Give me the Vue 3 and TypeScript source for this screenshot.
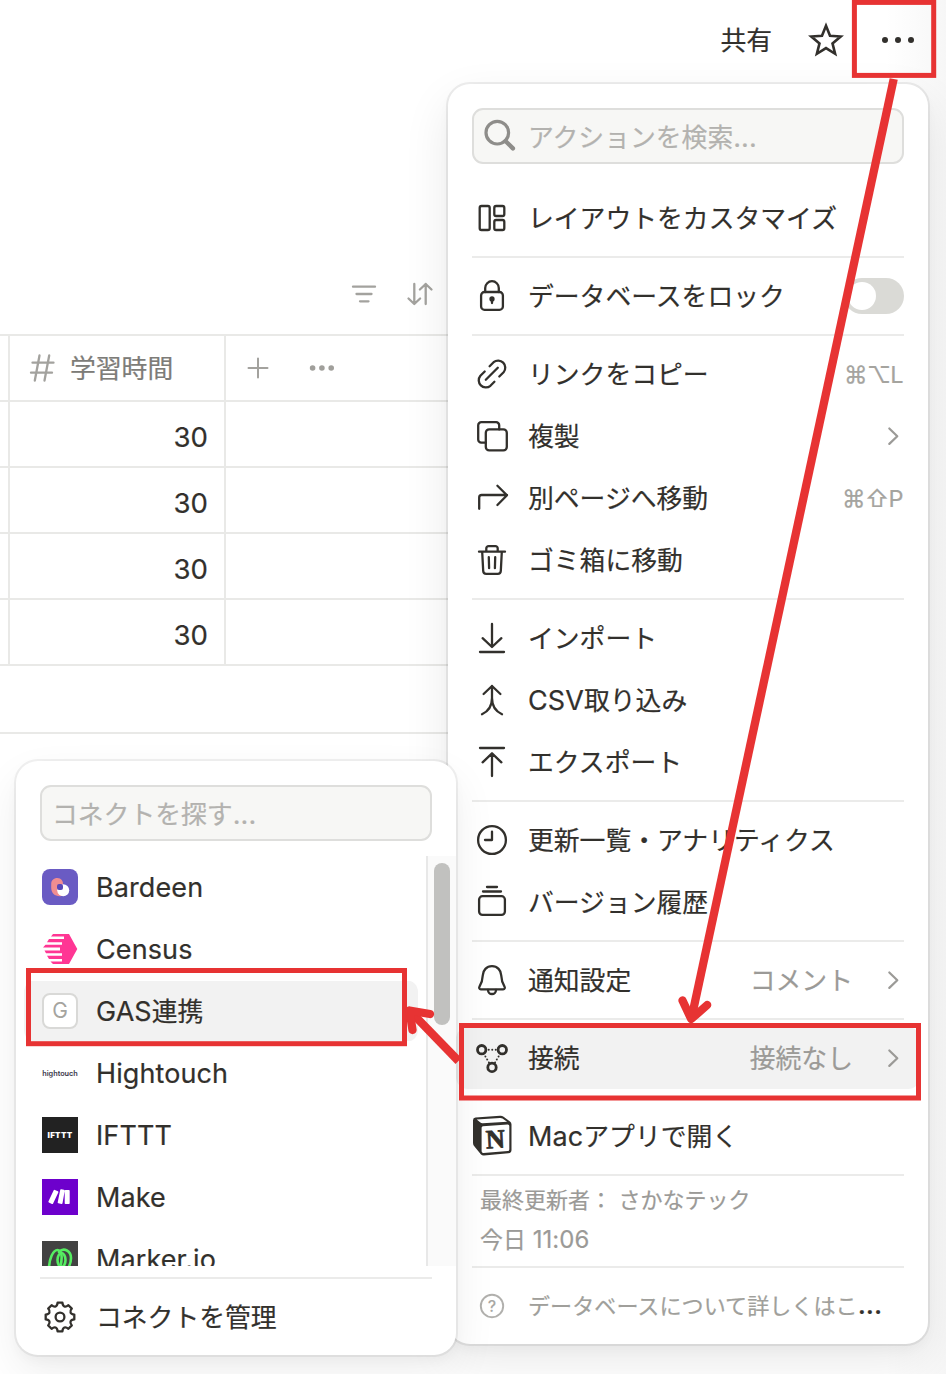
<script setup lang="ts">
import { defineComponent, h } from 'vue'

interface MenuItem {
  label: string
  icon: string
  value?: string
  keys?: string
  chevron?: boolean
  toggle?: boolean
  active?: boolean
}

/* Splits mixed text so that Latin runs get their own face and size. */
const Mixed = defineComponent({
  props: { text: { type: String, required: true } },
  setup(props) {
    return () =>
      h(
        'span',
        { class: 'mixed' },
        (props.text.match(/[\x20-\x7e]+|[^\x20-\x7e]+/g) ?? []).map((run) =>
          h('span', { class: /^[\x20-\x7e]/.test(run) ? 'latin' : 'cjk' }, run),
        ),
      )
  },
})

function gearPath(): string {
  const teeth = 8
  const at = (deg: number, r: number): string => {
    const a = (deg * Math.PI) / 180
    return `${(18 + r * Math.cos(a)).toFixed(2)} ${(18 + r * Math.sin(a)).toFixed(2)}`
  }
  let d = ''
  for (let i = 0; i < teeth; i++) {
    const base = (i * 360) / teeth - 90
    d += `${i ? 'L' : 'M'}${at(base - 9.5, 14.5)}L${at(base + 9.5, 14.5)}`
    d += `C${at(base + 15, 10.6)} ${at(base + 30, 10.6)} ${at(base + 35.5, 14.5)}`
  }
  return `${d}Z`
}

const icons: Record<string, string> = {
  layout:
    '<rect x="5.7" y="6" width="10" height="24" rx="1.8"/><rect x="20.3" y="6" width="10" height="10" rx="1.8"/><rect x="20.3" y="20" width="10" height="10" rx="1.8"/>',
  lock:
    '<rect x="7.1" y="14" width="21.8" height="17.8" rx="3.4"/><path d="M11.2 14v-4a6.8 6.8 0 0 1 13.6 0v4"/><circle cx="18" cy="21" r="1.5" fill="currentColor"/><path d="M18 21v4"/>',
  link:
    '<path d="M15.6 10.2l4-4a7.1 7.1 0 0 1 10 10l-4.3 4.3M20.4 25.8l-4 4a7.1 7.1 0 0 1-10-10l4.3-4.3M11.8 23.8l12-12"/>',
  copy:
    '<rect x="11.8" y="11.4" width="21" height="21" rx="3.4"/><path d="M11.8 24.6H7.3a3.1 3.1 0 0 1-3.1-3.1V7.3a3.1 3.1 0 0 1 3.1-3.1h14.8a3.1 3.1 0 0 1 3.1 3.1v4.1"/>',
  move: '<path d="M5.2 28.8V17.5a2.5 2.5 0 0 1 2.5-2.5H33M23.4 5.8 33 15.2 23.4 25"/>',
  trash:
    '<path d="M5 9.7h26M12.3 9.7V6.4a2.3 2.3 0 0 1 2.3-2.3h6.8a2.3 2.3 0 0 1 2.3 2.3v3.3M8.2 10l1 19a3 3 0 0 0 3 2.8h11.6a3 3 0 0 0 3-2.8l1-19M14.8 15.2l.3 11M21.2 15.2l-.3 11"/>',
  import: '<path d="M18 4v23M8.6 18.2 18 27l9.4-8.8M6 32h24"/>',
  merge: '<path d="M18 4v14.500M9.600 12 18 4l8.400 8M18 16c0 8-4 13.500-10 16.200M18 16c0 8 4 13.500 10 16.200"/>',
  export: '<path d="M18 32V9.500M8.600 18.300 18 9.300l9.400 9M6 4h24"/>',
  clock: '<circle cx="18" cy="18" r="13.900"/><path d="M18 9.600V18h-7"/>',
  history:
    '<rect x="5.100" y="12.200" width="25.800" height="18.700" rx="3.400"/><path d="M9 7.500h18M13 3h10"/>',
  bell:
    '<path d="M18 4.200c-5.500 0-9 4.100-9.200 9.100-.3 5.700-1.100 7.700-3.200 11-.9 1.600-.3 3 1.300 3h22.200c1.600 0 2.200-1.400 1.300-3-2.100-3.300-2.900-5.300-3.200-11-.2-5-3.700-9.100-9.200-9.100z"/><path d="M14 28a4 4 0 0 0 8 0"/>',
  connect:
    '<g stroke-width="2.800"><circle cx="7.700" cy="9.700" r="4.200"/><circle cx="28.300" cy="9.700" r="4.200"/><circle cx="18" cy="27.400" r="4.200"/></g><path stroke-width="1.900" stroke-dasharray=".1 3.400" d="M14.700 9.700h8M11.400 16.400l3.700 6.300M24.600 16.400l-3.700 6.300"/>',
  notion:
    '<path fill="currentColor" stroke="none" d="M1.500-.4 26-2.200q2-.2 3.600 1L36 3.400q1.500 1 1.500 3V32q0 3-3 3.200L10 37.600q-2 .1-3.200-1.300L.500 28.600Q-1 27-1 25V2.300Q-1-.1 1.500-.4z"/><path fill="#fff" stroke="none" d="M2.700 1.600 26-.1q1.400-.1 2.500.7l4.600 3.100-24.400 1.600q-1.300.1-2.300-.8zM9 8.200l24.600-1.700q1.700-.1 1.700 1.500v23.500q0 1.500-1.500 1.600L9.500 35q-1.900.1-1.900-1.700V9.800Q7.600 8.300 9 8.200z"/><text x="21.300" y="30" text-anchor="middle" font-family="Liberation Serif, serif" font-weight="700" font-size="26.500" fill="currentColor" stroke="currentColor" stroke-width=".8" transform="rotate(-3 21 21)">N</text>',
  gear: `<path d="${gearPath()}"/><circle cx="18" cy="18" r="4.400"/>`,
  bardeen:
    '<g stroke="none"><rect width="36" height="36" rx="8" fill="#6a5bc3"/><path fill="#f18d91" d="M15.300 9c4 0 6 3 5.700 6.500l-4 2.500c-.5 4 1.500 6.500 5 8.600-7 2-12.800-.6-12.800-8V15c0-3.500 2.500-6 6.100-6z"/><circle cx="21.200" cy="21.300" r="6" fill="#fff"/><rect x="15" y="15" width="6" height="6" rx="2" fill="#5a48b8"/></g>',
  census:
    '<path stroke="none" fill="#ff3694" d="M11 3h16l8.300 15L27 33H11L8.500 30.500H20V28H7L5 24.700h15v-2.500H4L2.500 19.500H18v-3H1L3.500 13.800H20v-2.500H5L7 8h15V5.500H9z"/>',
  make:
    '<g stroke="none"><path fill="#6d00cc" d="M0 0h36v36H0z"/><path fill="#fff" d="M11.700 11.300q.4-.8 1.200-.4l3 1.400q.8.400.4 1.200l-5.200 11q-.4.800-1.200.4l-3-1.500q-.8-.4-.4-1.200zM18.200 11q.2-.9 1-.7l2.800.5q.9.200.7 1.100l-2.200 12.300q-.2.900-1 .7l-3.100-.6q-.9-.2-.7-1.100zM23.500 11h3.400q.8 0 .8.800v12.400q0 .8-.8.800h-3.400q-.8 0-.8-.8V11.800q0-.8.800-.8z"/></g>',
  marker:
    '<path stroke="none" fill="#424242" d="M0 0h36v36H0z"/><g stroke="#55ed61" stroke-width="2.600"><path d="M7 28C7 18 11 9 15.500 9s5 8 3 16"/><ellipse cx="19.500" cy="19" rx="4" ry="7"/><path d="M17 11c5-5 12-1 12 6 0 6-3 11-6 13"/></g>',
}

const sections: MenuItem[][] = [
  [{ label: 'レイアウトをカスタマイズ', icon: 'layout' }],
  [{ label: 'データベースをロック', icon: 'lock', toggle: true }],
  [
    { label: 'リンクをコピー', icon: 'link', keys: '⌘⌥L' },
    { label: '複製', icon: 'copy', chevron: true },
    { label: '別ページへ移動', icon: 'move', keys: '⌘⇧P' },
    { label: 'ゴミ箱に移動', icon: 'trash' },
  ],
  [
    { label: 'インポート', icon: 'import' },
    { label: 'CSV取り込み', icon: 'merge' },
    { label: 'エクスポート', icon: 'export' },
  ],
  [
    { label: '更新一覧・アナリティクス', icon: 'clock' },
    { label: 'バージョン履歴', icon: 'history' },
  ],
  [{ label: '通知設定', icon: 'bell', value: 'コメント', chevron: true }],
  [{ label: '接続', icon: 'connect', value: '接続なし', chevron: true, active: true }],
  [{ label: 'Macアプリで開く', icon: 'notion' }],
]

const connections = [
  { name: 'Bardeen', icon: 'bardeen' },
  { name: 'Census', icon: 'census' },
  { name: 'GAS連携', letter: 'G', active: true },
  { name: 'Hightouch', word: 'hightouch' },
  { name: 'IFTTT', badge: 'IFTTT' },
  { name: 'Make', icon: 'make' },
  { name: 'Marker.io', icon: 'marker' },
]

const hours = [30, 30, 30, 30]
</script>

<template>
  <div class="page">
    <header class="topbar">
      <span class="share">共有</span>
      <svg class="star" width="36" height="36" viewBox="0 0 36 36" fill="none" stroke="#32302c" stroke-width="2.6">
        <path d="M18 3.800l4 9.900 10.700.8-8.200 6.900 2.600 10.400L18 26.100l-9.100 5.700 2.600-10.400-8.200-6.900 10.700-.8z" />
      </svg>
      <svg width="36" height="36" viewBox="0 0 36 36" fill="#32302c">
        <circle cx="5" cy="18" r="3" /><circle cx="18" cy="18" r="3" /><circle cx="31" cy="18" r="3" />
      </svg>
    </header>

    <div class="tools">
      <svg width="28" height="28" viewBox="0 0 28 28" class="line">
        <path d="M3 6.700h22M6.500 14h15M10 21.300h8.500" />
      </svg>
      <svg width="28" height="28" viewBox="0 0 28 28" class="line">
        <path d="M8.300 4v20M2.500 18.500l5.800 5.500 5.800-5.500M19.700 24V4M13.900 9.500l5.800-5.500 5.800 5.500" />
      </svg>
    </div>

    <div class="table">
      <div class="tr head">
        <div class="gutter"></div>
        <div class="th">
          <svg width="28" height="28" viewBox="0 0 28 28" class="line">
            <path d="M11.500 1.500l-4.700 25M21.200 1.500l-4.700 25M4.500 8.700h21M3 18.700h21" />
          </svg>
          <span>学習時間</span>
        </div>
        <div class="extra">
          <svg width="24" height="24" viewBox="0 0 24 24" class="line thin"><path d="M12 2.500v19M2.500 12h19" /></svg>
          <svg width="28" height="24" viewBox="0 0 28 24" fill="#a09f9b">
            <circle cx="4.600" cy="12" r="2.800" /><circle cx="13.900" cy="12" r="2.800" /><circle cx="23.200" cy="12" r="2.800" />
          </svg>
        </div>
      </div>
      <div v-for="(n, i) in hours" :key="i" class="tr">
        <div class="gutter"></div>
        <div class="td">{{ n }}</div>
      </div>
    </div>
    <div class="table-end"></div>

    <section class="menu">
      <div class="search">
        <svg width="36" height="36" viewBox="0 0 36 36" fill="none" stroke="#8e8d8a">
          <circle cx="15.300" cy="14.700" r="11.300" stroke-width="3.200" />
          <path d="M23.500 23l7.400 7.400" stroke-width="4.400" stroke-linecap="round" />
        </svg>
        <Mixed text="アクションを検索..." />
      </div>
      <div v-for="(items, s) in sections" :key="s" class="group">
        <div v-for="item in items" :key="item.label" class="row" :class="{ active: item.active }">
          <svg class="icon" width="36" height="36" viewBox="0 0 36 36" v-html="icons[item.icon]"></svg>
          <Mixed class="label" :text="item.label" />
          <span v-if="item.toggle" class="toggle"><i></i></span>
          <span v-if="item.keys" class="keys">{{ item.keys }}</span>
          <span v-if="item.value" class="value">{{ item.value }}</span>
          <svg v-if="item.chevron" class="chev" width="20" height="20" viewBox="0 0 20 20">
            <path d="M5.300 2.500l8 7.700-8 7.700" />
          </svg>
        </div>
      </div>
      <div class="meta">
        <p><Mixed text="最終更新者： さかなテック" /></p>
        <p class="time"><Mixed text="今日 11:06" /></p>
      </div>
      <div class="help">
        <svg width="36" height="36" viewBox="0 0 36 36">
          <circle cx="18" cy="18" r="11.200" fill="none" stroke="#b1b0ad" stroke-width="1.900" />
          <text x="18" y="23.800" text-anchor="middle" font-family="Inter" font-weight="500" font-size="16" fill="#a9a8a4">?</text>
        </svg>
        <span class="help-text">データベースについて詳しくはこ<b>...</b></span>
      </div>
    </section>

    <section class="connect">
      <div class="search"><Mixed text="コネクトを探す..." /></div>
      <div class="scroll">
        <div class="list">
          <div v-for="c in connections" :key="c.name" class="row" :class="{ active: c.active }">
            <svg v-if="c.icon" class="icon" width="36" height="36" viewBox="0 0 36 36" v-html="icons[c.icon]"></svg>
            <span v-else-if="c.letter" class="letter">{{ c.letter }}</span>
            <span v-else-if="c.word" class="word">{{ c.word }}</span>
            <span v-else class="badge">{{ c.badge }}</span>
            <Mixed class="label" :text="c.name" />
          </div>
        </div>
        <div class="track"><div class="thumb"></div></div>
      </div>
      <div class="manage">
        <svg class="icon" width="36" height="36" viewBox="0 0 36 36" v-html="icons.gear"></svg>
        <Mixed class="label" text="コネクトを管理" />
      </div>
    </section>

    <svg class="marks" width="946" height="1374" viewBox="0 0 946 1374">
      <rect x="854.400" y="2.400" width="79.300" height="73" />
      <rect x="461.500" y="1025.500" width="457" height="72.500" />
      <rect x="28.500" y="970.500" width="376" height="73.200" />
      <g class="arrows">
        <path d="M893.700 79 691.500 1018" />
        <path d="M458.500 1061 411 1012" />
        <path class="tip" d="M682.500 1000.500l8.700 18.500 16-14" />
        <path class="tip" d="M430 1014l-20.500-3.500 3 19.500" />
      </g>
    </svg>
  </div>
</template>

<style>
body {
  margin: 0;
  background: #fff;
}

.mixed {
  white-space: pre;
  display: inline-flex;
  align-items: baseline;
}

.mixed .latin {
  font-size: 1.045em;
  letter-spacing: 0.12px;
}

.mixed .cjk:only-child,
.row .mixed .latin:first-child {
  padding-top: 2px;
}

.search .mixed {
  padding-top: 3px;
}
</style>

<style scoped>
.page {
  position: relative;
  width: 946px;
  height: 1374px;
  overflow: hidden;
  background: linear-gradient(90deg, transparent 885px, rgba(15, 15, 15, 0.035) 946px), #fff;
  color: #32302c;
  font-family: Inter, 'Noto Sans CJK JP', sans-serif;
  font-size: 25.82px;
  line-height: 36px;
  -webkit-text-stroke: 0.2px currentColor;
}

svg {
  display: block;
  flex: none;
  -webkit-text-stroke: 0;
}

.topbar {
  display: flex;
  align-items: center;
  justify-content: flex-end;
  height: 80px;
  padding-right: 30px;
}

.share {
  margin-right: 36px;
  padding-top: 2px;
}

.star {
  margin-right: 36px;
}

.line {
  fill: none;
  stroke: #a3a29e;
  stroke-width: 2.3;
  stroke-linecap: round;
  stroke-linejoin: round;
}

.thin {
  stroke-width: 2;
}

.tools {
  display: flex;
  gap: 28px;
  margin: 200px 0 0 350px;
}

.table {
  width: 460px;
  margin-top: 26px;
  border-top: 2px solid #e9e9e7;
}

.tr {
  display: flex;
  height: 64px;
  border-bottom: 2px solid #e9e9e7;
}

.gutter {
  width: 8px;
  border-right: 2px solid #e9e9e7;
}

.th,
.td {
  box-sizing: border-box;
  width: 216px;
  border-right: 2px solid #e9e9e7;
  display: flex;
  align-items: center;
}

.th {
  padding-left: 18px;
  gap: 14px;
  color: #7d7c78;
}

.th span {
  padding-top: 2px;
}

.td {
  justify-content: flex-end;
  padding: 5px 16px 0 0;
  font-size: 27.6px;
}

.extra {
  display: flex;
  align-items: center;
  gap: 38px;
  padding-left: 20px;
}

.table-end {
  width: 460px;
  margin-top: 66px;
  height: 2px;
  background: #e9e9e7;
}

.menu,
.connect {
  position: absolute;
  box-sizing: border-box;
  background: #fff;
  border-radius: 22px;
}

.menu {
  left: 448px;
  top: 84px;
  width: 480px;
  height: 1260px;
  padding: 24px 24px 0;
  box-shadow:
    0 0 0 2px rgba(15, 15, 15, 0.07),
    0 6px 12px rgba(15, 15, 15, 0.03),
    0 18px 48px rgba(15, 15, 15, 0.09);
}

.connect {
  left: 16px;
  top: 761px;
  width: 440px;
  height: 594px;
  padding-top: 24px;
  box-shadow:
    0 0 0 2px rgba(15, 15, 15, 0.06),
    0 6px 12px rgba(15, 15, 15, 0.03),
    0 18px 44px rgba(15, 15, 15, 0.07);
}

.search {
  box-sizing: border-box;
  height: 56px;
  display: flex;
  align-items: center;
  padding-left: 8px;
  gap: 10px;
  border: 2px solid #dededc;
  border-radius: 11px;
  background: #f7f7f5;
  color: #b3b2af;
}

.menu .search {
  margin-bottom: 16px;
}

.connect .search {
  margin: 0 24px 15px;
  padding-left: 10px;
}

.group {
  padding: 7px 0;
  border-bottom: 2px solid #ebebea;
}

.row {
  display: flex;
  align-items: center;
  height: 62px;
}

.menu .row {
  margin: 0 -16px;
  padding: 0 16px 0 18px;
  border-radius: 12px;
}

.menu .row.active {
  background: #f2f2f2;
}

.icon {
  overflow: visible;
  fill: none;
  stroke: currentColor;
  stroke-width: 2.3;
  stroke-linecap: round;
  stroke-linejoin: round;
}

.label {
  margin-left: 18px;
  flex: 1;
}

.value {
  color: #9b9a97;
  margin-right: 31px;
  padding-top: 2px;
}

.keys {
  color: #a5a49f;
  font-size: 23.5px;
  letter-spacing: -0.6px;
  padding-top: 2px;
  padding-right: 1px;
}

.chev {
  fill: none;
  stroke: #9b9a97;
  stroke-width: 2.2;
  stroke-linecap: round;
  stroke-linejoin: round;
}

.toggle {
  box-sizing: border-box;
  width: 60px;
  height: 36px;
  padding: 4px;
  border-radius: 18px;
  background: #dadad6;
}

.toggle i {
  display: block;
  width: 28px;
  height: 28px;
  border-radius: 50%;
  background: #fff;
}

.meta {
  box-sizing: border-box;
  height: 92px;
  padding: 4px 8px 0;
  border-bottom: 2px solid #ebebea;
  color: #9b9a97;
  font-size: 22px;
  line-height: 40px;
}

.meta p {
  margin: 0;
  height: 40px;
}

.meta .time {
  font-size: 22.9px;
}

.help {
  display: flex;
  align-items: center;
  height: 76px;
  padding-left: 2px;
  gap: 18px;
}

.help-text {
  margin-top: -2px;
  color: #a09f9b;
  font-size: 22.1px;
  white-space: nowrap;
}

.help-text b {
  color: #32302c;
  font-weight: 500;
  font-size: 27px;
}

.scroll {
  display: flex;
  height: 410px;
  overflow: hidden;
}

.list {
  flex: 1;
  overflow: hidden;
}

.list .row {
  margin: 0 8px;
  padding-left: 18px;
}

.list .row.active {
  background: linear-gradient(#f2f2f2, #f2f2f2) no-repeat 0 1px / 100% 60px;
  border-radius: 12px;
}

.letter,
.badge,
.word {
  box-sizing: border-box;
  width: 36px;
  height: 36px;
  display: flex;
  align-items: center;
  justify-content: center;
  -webkit-text-stroke: 0;
}

.letter {
  border: 2px solid #d9d9d7;
  border-radius: 8px;
  background: #fff;
  color: #a5a49f;
  font-size: 21px;
}

.word {
  font: 600 7.3px Inter, sans-serif;
  color: #3a3648;
}

.badge {
  background: #222;
  color: #fff;
  font: 900 8px Inter, sans-serif;
  letter-spacing: 0.3px;
}

.track {
  box-sizing: border-box;
  width: 30px;
  padding: 7px 6px;
  border-left: 2px solid #e8e8e8;
  background: #fafafa;
}

.thumb {
  width: 16px;
  height: 162px;
  border-radius: 8px;
  background: #c1c1bf;
}

.manage {
  display: flex;
  align-items: center;
  margin: 11px 24px 0;
  height: 76px;
  padding-left: 2px;
  border-top: 2px solid #ebebea;
}

.marks {
  position: absolute;
  inset: 0;
  fill: none;
  stroke: #e73333;
  stroke-width: 5;
}

.arrows {
  stroke-width: 8.3;
}

.tip {
  stroke-linecap: round;
  stroke-linejoin: round;
}
</style>
